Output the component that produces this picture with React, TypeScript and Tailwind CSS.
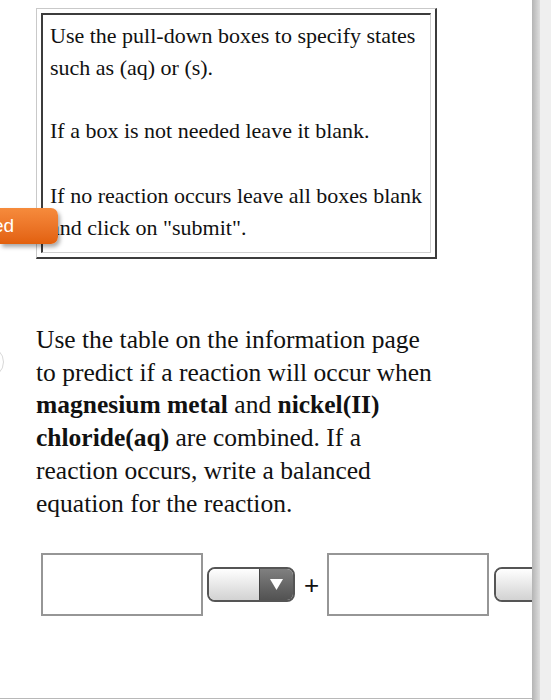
import React from 'react'

// ── pull-down box (state selector) ─────────────────────────────────────────────
function StateSelect({ clipped = false }: { clipped?: boolean }) {
  return (
    <div className="flex h-[35px] w-[88px] shrink-0 overflow-hidden rounded-[8px] border-2 border-[#555]">
      <div className="h-full flex-1 bg-gradient-to-b from-[#ffffff] to-[#d2d2d2]" />
      {!clipped && (
        <div className="flex h-full w-[34px] items-center justify-center border-l border-[#444] bg-gradient-to-b from-[#808080] to-[#525252]">
          <svg width="13" height="11" viewBox="0 0 13 11">
            <polygon points="0,0 13,0 6.5,11" fill="#ffffff" />
          </svg>
        </div>
      )}
    </div>
  )
}

function FormulaBox() {
  return <div className="h-[63px] w-[162px] shrink-0 border-2 border-[#969696] bg-white" />
}

export default function App() {
  return (
    <div className="flex h-[700px] w-[551px] bg-white" style={{ fontFamily: '"Liberation Serif", "Times New Roman", serif' }}>
      {/* Main pane */}
      <div className="relative h-[699px] w-[532px] shrink-0 overflow-hidden border-b border-[#b8b8b8] text-[#111]">
        {/* Instructions table */}
        <div className="ml-[36px] mt-[8px] h-[251px] w-[401px] border border-t-[#c9c9c9] border-l-[#c9c9c9] border-b-[#3c3c3c] border-r-[#3c3c3c] border-b-2 border-r-2 p-[4px]">
          <div className="h-[240px] border border-t-[#3c3c3c] border-l-[#3c3c3c] border-t-2 border-l-2 border-b-[#d0d0d0] border-r-[#d0d0d0] pl-[7px] pt-[5px] text-[22px] leading-[32px]">
            <p>Use the pull-down boxes to specify states such as (aq) or (s).</p>
            <p className="mt-[31px]">If a box is not needed leave it blank.</p>
            <p className="mt-[33px]">If no reaction occurs leave all boxes blank and click on "submit".</p>
          </div>
        </div>

        {/* Orange button peeking in from the left */}
        <div className="absolute left-0 top-[208px] flex h-[36px] w-[58px] items-center overflow-hidden rounded-r-[7px] bg-gradient-to-b from-[#f68b3c] to-[#e2600c] shadow-[2px_3px_4px_rgba(0,0,0,0.35)]">
          <span className="ml-[-7px] text-[19px] text-white" style={{ fontFamily: '"Liberation Sans", Arial, sans-serif' }}>
            ed
          </span>
        </div>

        {/* Faint circle edge at the left */}
        <div className="absolute left-[-30px] top-[346px] h-[32px] w-[34px] rounded-full border border-[#d8d8d8]" />

        {/* Question */}
        <p className="ml-[36px] mt-[65px] w-[400px] text-[25.5px] leading-[32.7px]">
          Use the table on the information page to predict if a reaction will occur when{' '}
          <b>magnesium metal</b> and <b>nickel(II) chloride(aq)</b> are combined. If a reaction occurs, write a
          balanced equation for the reaction.
        </p>

        {/* Equation inputs */}
        <div className="ml-[41px] mt-[33px] flex items-center">
          <FormulaBox />
          <div className="ml-[4px]">
            <StateSelect />
          </div>
          <span className="ml-[9px] mr-[8px] text-[26px] leading-none" style={{ fontFamily: '"Liberation Sans", Arial, sans-serif' }}>
            +
          </span>
          <FormulaBox />
          <div className="ml-[5px]">
            <StateSelect clipped />
          </div>
        </div>
      </div>

      {/* Scrollbar strip */}
      <div className="flex h-[700px] flex-1">
        <div className="h-full w-[8px] bg-gradient-to-r from-[#b4b4b4] to-[#dedede]" />
        <div className="h-full flex-1 bg-[#efefef]" />
      </div>
    </div>
  )
}
